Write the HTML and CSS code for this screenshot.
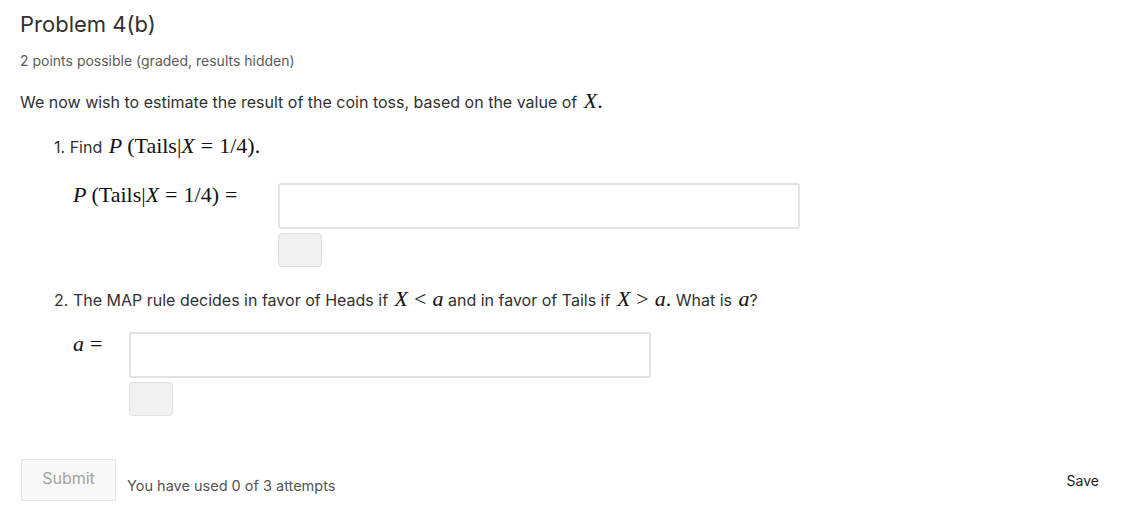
FILE: index.html
```html
<!DOCTYPE html>
<html>
<head>
<meta charset="utf-8">
<link rel="stylesheet" href="styles.css">
</head>
<body>
<div class="problem">
  <h3 class="title">Problem 4(b)</h3>
  <div class="meta">2 points possible (graded, results hidden)</div>
  <p class="intro">We now wish to estimate the result of the coin toss, based on the value of <span class="m"><i>X</i>.</span></p>
  <ol class="parts">
    <li>
      <div class="q"><span class="num">1.</span> Find <span class="m"><i class="fn">P</i>(Tails|<i>X</i><span class="rel">=</span>1/4).</span></div>
      <div class="answer">
        <div class="label"><span class="m"><i class="fn">P</i>(Tails|<i>X</i><span class="rel">=</span>1/4)<span class="rel">=</span></span></div>
        <div class="field">
          <div class="input"></div>
          <div class="preview"></div>
        </div>
      </div>
    </li>
    <li>
      <div class="q"><span class="num">2.</span> The MAP rule decides in favor of Heads if <span class="m"><i>X</i><span class="rel">&lt;</span><i>a</i></span> and in favor of Tails if <span class="m"><i>X</i><span class="rel">&gt;</span><i>a</i>.</span> What is <span class="m"><i>a</i></span>?</div>
      <div class="answer">
        <div class="label short"><span class="m"><i>a</i><span class="rel">=</span></span></div>
        <div class="field">
          <div class="input"></div>
          <div class="preview"></div>
        </div>
      </div>
    </li>
  </ol>
  <div class="actions">
    <button class="submit">Submit</button>
    <span class="attempts">You have used 0 of 3 attempts</span>
    <span class="save">Save</span>
  </div>
</div>
</body>
</html>
```
FILE: styles.css
```css
* { box-sizing: border-box; }
body {
  margin: 0;
  background: #fff;
  font-family: Inter, "Liberation Sans", sans-serif;
  color: #313131;
}
.problem {
  padding: 10px 35px 0 20px;
}
.title {
  margin: 0;
  font-size: 22px;
  font-weight: 400;
  line-height: 28px;
  color: #313131;
}
.meta {
  margin-top: 15px;
  font-size: 14px;
  line-height: 16px;
  color: #5b5b5b;
}
.intro {
  margin: 21px 0 0 0;
  font-size: 16px;
  line-height: 24px;
}
.m {
  font-family: "Liberation Serif", "DejaVu Serif", serif;
  font-size: 22px;
  line-height: 1;
  color: #111;
  white-space: nowrap;
  margin-left: 2px;
}
.m i { font-style: italic; }
.m .fn { margin-right: 5px; }
.m .rel { margin: 0 6px; }
.parts {
  margin: 0;
  padding: 0 0 0 34px;
  list-style: none;
  font-size: 16px;
  line-height: 24px;
}
.parts li { margin-top: 21px; }
.answer {
  display: flex;
  align-items: flex-start;
  margin-top: 24px;
  margin-left: 19px;
}
.label {
  width: 205px;
  line-height: 22px;
  padding-top: 1px;
}
.label .m { margin-left: 0; }
.label.short { width: 56px; }
.field { display: flex; flex-direction: column; gap: 4px; }
.input {
  width: 522px;
  height: 46px;
  border: 2px solid #e3e3e3;
  border-radius: 3px;
  background: #fff;
}
.preview {
  width: 44px;
  height: 34px;
  border: 1px solid #e0e0e0;
  border-radius: 4px;
  background: #f1f1f1;
}
.parts li:nth-child(2) .answer { margin-top: 20px; }
.actions {
  display: flex;
  align-items: center;
  margin-top: 43px;
}
.submit {
  width: 95px;
  height: 42px;
  margin-left: 1px;
  border: 1px solid #e4e4e4;
  background: #f8f8f8;
  color: #a3a3a3;
  font-family: Inter, "Liberation Sans", sans-serif;
  font-size: 16px;
  padding: 0 0 4px 0;
}
.attempts {
  margin-left: 11px;
  margin-top: 10px;
  font-size: 14.5px;
  color: #555;
}
.save {
  margin-left: auto;
  font-size: 14px;
  color: #1e1e1e;
}
```
